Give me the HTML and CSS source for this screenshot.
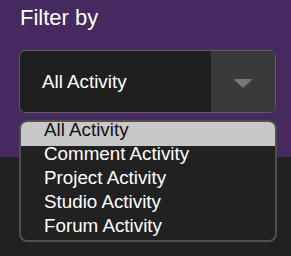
FILE: index.html
```html
<!DOCTYPE html>
<html>
<head>
<meta charset="utf-8">
<link rel="stylesheet" href="styles.css">
</head>
<body>
<div class="page">
  <section class="filter">
    <div class="filter-label">Filter by</div>
    <div class="select">
      <div class="select-value">All Activity</div>
      <div class="select-arrow">
        <svg width="20" height="10" viewBox="0 0 20 10"><path d="M1.5 1 H18.5 Q19.6 1 18.8 1.9 L11.2 9 Q10 10 8.8 9 L1.2 1.9 Q0.4 1 1.5 1 Z" fill="#777"/></svg>
      </div>
    </div>
    <ul class="options">
      <li class="option selected">All Activity</li>
      <li class="option">Comment Activity</li>
      <li class="option">Project Activity</li>
      <li class="option">Studio Activity</li>
      <li class="option">Forum Activity</li>
    </ul>
  </section>
</div>
</body>
</html>
```

FILE: styles.css
```css
html, body {
  margin: 0;
  padding: 0;
  background: #212121;
  font-family: "Liberation Sans", Arial, sans-serif;
}
.page {
  width: 291px;
  height: 256px;
  position: relative;
}
.filter {
  background: #45295f;
  height: 157px;
  padding: 6px 15px 0 19px;
  box-sizing: border-box;
}
.filter-label {
  color: #fff;
  font-size: 22px;
  line-height: 24px;
  padding-left: 1px;
}
.select {
  margin-top: 20px;
  width: 257px;
  height: 63px;
  box-sizing: border-box;
  border: 1px solid #5e5e5e;
  border-radius: 6px;
  overflow: hidden;
  display: flex;
  background: #1f1f1f;
}
.select-value {
  flex: 1;
  color: #fff;
  font-size: 18.8px;
  line-height: 20px;
  padding-left: 22px;
  display: flex;
  align-items: center;
}
.select-arrow {
  width: 64px;
  background: #3a3a3a;
  display: flex;
  align-items: center;
  justify-content: center;
  padding-top: 2px;
  box-sizing: border-box;
}
.select-arrow svg { display: block; }
.options {
  position: absolute;
  top: 120px;
  left: 19px;
  width: 258px;
  height: 122px;
  box-sizing: border-box;
  margin: 0;
  padding: 0;
  list-style: none;
  background: #212121;
  border: 2px solid #4f4f4f;
  border-radius: 8px;
  overflow: hidden;
}
.option {
  height: 24px;
  line-height: 16px;
  font-size: 18.8px;
  color: #fff;
  padding-left: 23px;
  box-sizing: border-box;
}
.option.selected {
  background: #c8c8c8;
  color: #111;
}
```
